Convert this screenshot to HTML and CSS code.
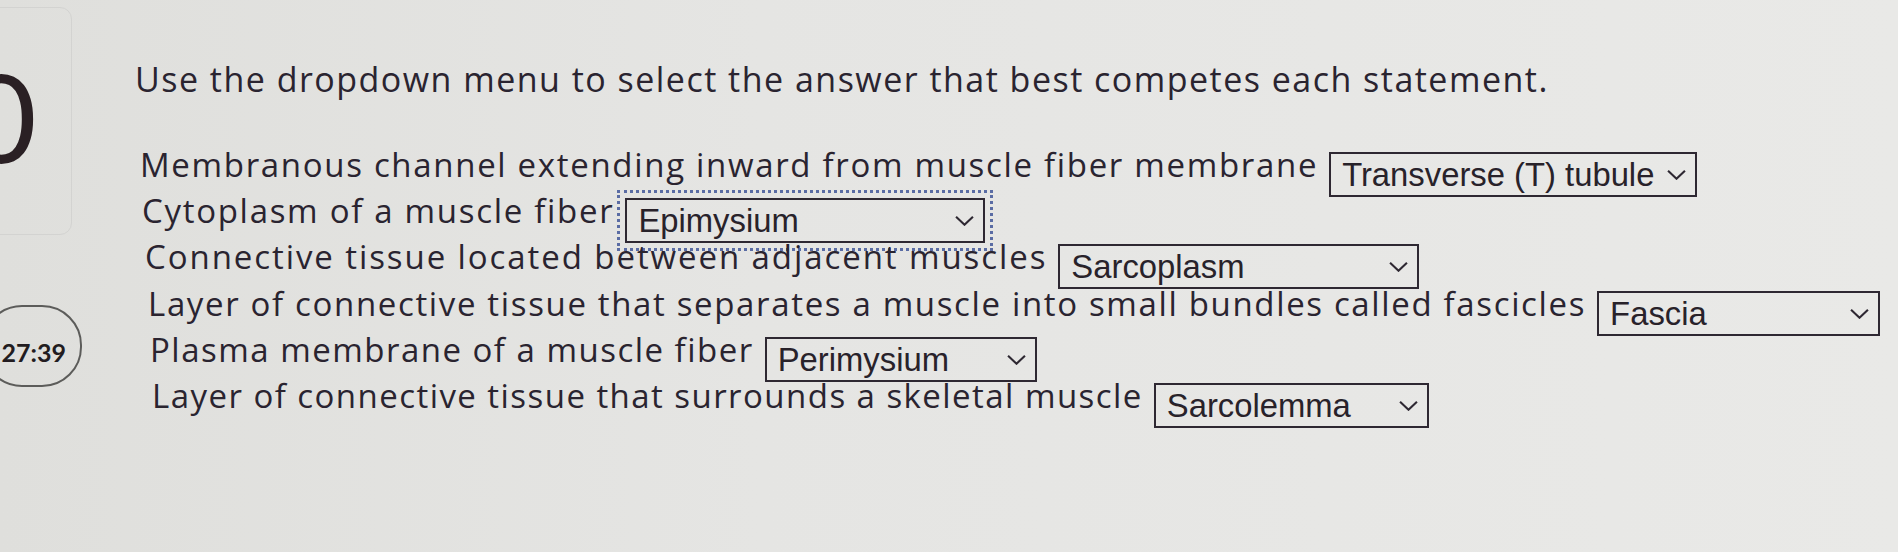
FILE: index.html
```html
<!DOCTYPE html>
<html lang="en">
<head>
<meta charset="utf-8">
<title>Dropdown question</title>
<link rel="stylesheet" href="styles.css">
</head>
<body>
<div class="page">
  <aside class="side">
    <div class="card"><span class="big">0</span></div>
    <div class="timer">27:39</div>
  </aside>
  <main class="main">
    <p class="title">Use the dropdown menu to select the answer that best competes each statement.</p>
    <div class="rows">
      <div class="row r1">
        <span class="stmt">Membranous channel extending inward from muscle fiber membrane</span>
        <div class="select w1"><span class="val">Transverse (T) tubule</span><svg class="chev" viewBox="0 0 18 10"><path d="M1 1.5l8 7.5 8-7.5"/></svg></div>
      </div>
      <div class="row r2">
        <span class="stmt">Cytoplasm of a muscle fiber</span>
        <div class="select w2 focused"><span class="val">Epimysium</span><svg class="chev" viewBox="0 0 18 10"><path d="M1 1.5l8 7.5 8-7.5"/></svg></div>
      </div>
      <div class="row r3">
        <span class="stmt">Connective tissue located between adjacent muscles</span>
        <div class="select w3"><span class="val">Sarcoplasm</span><svg class="chev" viewBox="0 0 18 10"><path d="M1 1.5l8 7.5 8-7.5"/></svg></div>
      </div>
      <div class="row r4">
        <span class="stmt">Layer of connective tissue that separates a muscle into small bundles called fascicles</span>
        <div class="select w4"><span class="val">Fascia</span><svg class="chev" viewBox="0 0 18 10"><path d="M1 1.5l8 7.5 8-7.5"/></svg></div>
      </div>
      <div class="row r5">
        <span class="stmt">Plasma membrane of a muscle fiber</span>
        <div class="select w5"><span class="val">Perimysium</span><svg class="chev" viewBox="0 0 18 10"><path d="M1 1.5l8 7.5 8-7.5"/></svg></div>
      </div>
      <div class="row r6">
        <span class="stmt">Layer of connective tissue that surrounds a skeletal muscle</span>
        <div class="select w6"><span class="val">Sarcolemma</span><svg class="chev" viewBox="0 0 18 10"><path d="M1 1.5l8 7.5 8-7.5"/></svg></div>
      </div>
    </div>
  </main>
</div>
</body>
</html>
```
FILE: styles.css
```css
html, body {
  margin: 0;
  padding: 0;
}
body {
  width: 1898px;
  height: 552px;
  overflow: hidden;
  background: linear-gradient(90deg, #dfdfdc 0%, #e5e5e3 40%, #e9e9e7 100%);
  color: #2a2430;
  font-family: "Open Sans", "Noto Sans", sans-serif;
}
.page {
  display: flex;
  align-items: flex-start;
}
.side {
  flex: none;
  width: 100px;
  margin-left: -18px;
  display: flex;
  flex-direction: column;
}
.card {
  box-sizing: border-box;
  width: 90px;
  height: 228px;
  margin-top: 7px;
  border: 1.5px solid #d3d3d1;
  border-radius: 12px;
  overflow: hidden;
  padding-top: 47px;
  display: flex;
}
.big {
  margin-left: -17px;
  font-family: Lato, sans-serif;
  font-size: 122px;
  line-height: 1;
  color: #2a2024;
}
.timer {
  box-sizing: border-box;
  width: 100px;
  height: 82px;
  margin-top: 70px;
  border: 2px solid #5c5c5a;
  border-radius: 40px;
  display: flex;
  align-items: center;
  justify-content: flex-end;
  padding: 12px 14px 0 0;
  font-family: Lato, sans-serif;
  font-weight: 700;
  font-size: 25px;
  color: #221c20;
}
.main {
  margin-left: 53px;
}
.title {
  margin: 59px 0 0;
  font-size: 34px;
  line-height: 40px;
  letter-spacing: 1.48px;
  white-space: nowrap;
}
.rows {
  margin-top: 43px;
  padding-left: 5px;
}
.row {
  display: flex;
  align-items: flex-start;
  gap: 11px;
  height: 46px;
  white-space: nowrap;
}
.stmt {
  font-size: 33px;
  line-height: 46px;
  letter-spacing: 1.6px;
}
.r1 .stmt { letter-spacing: 1.68px; }
.r2 { padding-left: 2px; }
.r2 .stmt { letter-spacing: 1.7px; }
.r3 { padding-left: 5px; height: 47px; }
.r3 .stmt { letter-spacing: 1.92px; }
.r4 { padding-left: 8px; }
.r4 .stmt { letter-spacing: 1.65px; }
.r5 { padding-left: 10px; }
.r5 .stmt { letter-spacing: 1.49px; }
.r6 { padding-left: 12px; }
.r6 .stmt { letter-spacing: 1.45px; }
.select {
  box-sizing: border-box;
  flex: none;
  height: 45px;
  margin-top: 10px;
  border: 2px solid #2e2832;
  display: flex;
  align-items: center;
  padding: 0 9px 0 11px;
  font-family: "Liberation Sans", Arial, sans-serif;
  font-size: 32.8px;
  color: #28222a;
}
.select.focused {
  outline: 3px dotted #5a6ca4;
  outline-offset: 5px;
}
.val {
  line-height: 41px;
}
.chev {
  width: 19px;
  height: 11px;
  margin-left: auto;
  fill: none;
  stroke: #2e2832;
  stroke-width: 2;
}
.w1 { width: 368px; }
.w2 { width: 360px; }
.w3 { width: 361px; }
.w4 { width: 283px; }
.w5 { width: 272px; }
.w6 { width: 275px; }
```
